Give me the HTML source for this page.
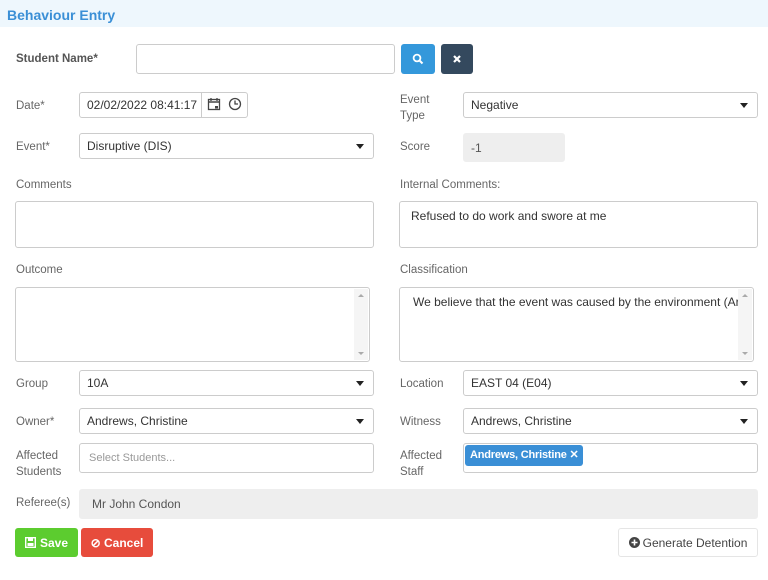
<!DOCTYPE html>
<html><head><style>
body{margin:0;width:768px;height:580px;background:#fff;font-family:"Liberation Sans",sans-serif;font-size:12px;color:#555;position:relative;overflow:hidden}
.a{position:absolute}
.hdr{left:0;top:0;width:768px;height:27px;background:#eef7fd}
.t{left:7px;top:7px;font-size:14px;font-weight:bold;color:#3a8fd6}
.lbl{position:absolute;color:#666;font-size:11.5px;line-height:16px}
.in{position:absolute;box-sizing:border-box;border:1px solid #ccc;border-radius:3px;background:#fff;color:#333;font-size:12px;padding:0 7px;display:flex;align-items:center;white-space:nowrap}
.sel::after{content:"";position:absolute;right:9px;top:50%;margin-top:-2px;border:4px solid transparent;border-top:5px solid #222;border-bottom:0}
.ta{align-items:flex-start;padding-top:7px}
.sb{position:absolute;right:1px;top:1px;bottom:1px;width:14px;background:#f5f5f5}
.sb::before{content:"";position:absolute;left:4px;top:5px;border:3px solid transparent;border-bottom:3px solid #aaa;border-top:0}
.sb::after{content:"";position:absolute;left:4px;bottom:5px;border:3px solid transparent;border-top:3px solid #aaa;border-bottom:0}
.gray{background:#eee;border-color:#eee;color:#555}
.btn{position:absolute;box-sizing:border-box;border-radius:3px;color:#fff;font-weight:bold;font-size:12px;display:flex;align-items:center;justify-content:center}
</style></head><body>
<div class="a hdr"></div><div class="a t">Behaviour Entry</div>

<div class="lbl" style="left:16px;top:51px;font-weight:bold;color:#555">Student Name*</div>
<div class="in" style="left:136px;top:44px;width:259px;height:30px"></div>
<div class="btn" style="left:401px;top:44px;width:34px;height:30px;background:#3498db"><svg width="12" height="12" viewBox="0 0 12 12"><circle cx="5" cy="5" r="3.4" fill="none" stroke="#fff" stroke-width="1.8"/><path d="M7.5 7.5L10.5 10.5" stroke="#fff" stroke-width="2"/></svg></div>
<div class="btn" style="left:441px;top:44px;width:32px;height:30px;background:#34495e"><svg width="10" height="10" viewBox="0 0 10 10"><path d="M2 2L8 8M8 2L2 8" stroke="#fff" stroke-width="2.2"/></svg></div>

<div class="lbl" style="left:16px;top:98px">Date*</div>
<div class="in" style="left:79px;top:92px;width:169px;height:26px">02/02/2022 08:41:17</div>
<div class="a" style="left:201px;top:92px;width:1px;height:26px;background:#ccc"></div>
<div class="a" style="left:207px;top:97px"><svg width="14" height="14" viewBox="0 0 14 14"><rect x="1.5" y="2.5" width="11" height="10" fill="none" stroke="#444" stroke-width="1.3"/><path d="M1.5 5h11" stroke="#444" stroke-width="1.5"/><path d="M4 1v3M10 1v3" stroke="#444" stroke-width="1.3"/><rect x="8" y="9" width="3" height="2.5" fill="#444"/></svg></div>
<div class="a" style="left:228px;top:97px"><svg width="14" height="14" viewBox="0 0 14 14"><circle cx="7" cy="7" r="5.5" fill="none" stroke="#444" stroke-width="1.3"/><path d="M7 3.5V7h3" fill="none" stroke="#444" stroke-width="1.3"/></svg></div>

<div class="lbl" style="left:400px;top:92px">Event<br>Type</div>
<div class="in sel" style="left:463px;top:92px;width:295px;height:26px">Negative</div>

<div class="lbl" style="left:16px;top:139px">Event*</div>
<div class="in sel" style="left:79px;top:133px;width:295px;height:26px">Disruptive (DIS)</div>
<div class="lbl" style="left:400px;top:139px">Score</div>
<div class="in gray" style="left:463px;top:133px;width:102px;height:29px">-1</div>

<div class="lbl" style="left:16px;top:177px">Comments</div>
<div class="in" style="left:15px;top:201px;width:359px;height:47px"></div>
<div class="lbl" style="left:400px;top:177px">Internal Comments:</div>
<div class="in ta" style="left:399px;top:201px;width:359px;height:47px;padding-left:11px">Refused to do work and swore at me</div>

<div class="lbl" style="left:16px;top:262px">Outcome</div>
<div class="in" style="left:15px;top:287px;width:355px;height:75px"><div class="sb"></div></div>
<div class="lbl" style="left:400px;top:262px">Classification</div>
<div class="in ta" style="left:399px;top:287px;width:355px;height:75px;padding-left:13px;overflow:hidden">We believe that the event was caused by the environment (Ar<div class="sb"></div></div>

<div class="lbl" style="left:16px;top:376px">Group</div>
<div class="in sel" style="left:79px;top:370px;width:295px;height:26px">10A</div>
<div class="lbl" style="left:400px;top:376px">Location</div>
<div class="in sel" style="left:463px;top:370px;width:295px;height:26px">EAST 04 (E04)</div>

<div class="lbl" style="left:16px;top:414px">Owner*</div>
<div class="in sel" style="left:79px;top:408px;width:295px;height:26px">Andrews, Christine</div>
<div class="lbl" style="left:400px;top:414px">Witness</div>
<div class="in sel" style="left:463px;top:408px;width:295px;height:26px">Andrews, Christine</div>

<div class="lbl" style="left:16px;top:448px">Affected<br>Students</div>
<div class="in" style="left:79px;top:443px;width:295px;height:30px;color:#999;font-size:11px;padding-left:9px">Select Students...</div>
<div class="lbl" style="left:400px;top:448px">Affected<br>Staff</div>
<div class="in" style="left:463px;top:443px;width:295px;height:30px;padding:0"></div>
<div class="a" style="left:465px;top:445px;width:118px;height:21px;background:#3a8fd6;border-radius:3px;color:#fff;font-size:11px;font-weight:bold;line-height:20px;padding-left:5px;box-sizing:border-box;white-space:nowrap;overflow:hidden;letter-spacing:-0.2px">Andrews, Christine ✕</div>

<div class="lbl" style="left:16px;top:495px">Referee(s)</div>
<div class="in gray" style="left:79px;top:489px;width:679px;height:30px;padding-left:12px">Mr John Condon</div>

<div class="btn" style="left:15px;top:528px;width:63px;height:29px;background:#5ccc2f"><svg width="11" height="11" viewBox="0 0 11 11" style="margin-right:4px"><rect x="0.7" y="0.7" width="9.6" height="9.6" fill="none" stroke="#fff" stroke-width="1.4"/><rect x="3" y="1" width="5" height="3" fill="#fff"/><rect x="2.5" y="6" width="6" height="3" fill="#fff"/></svg>Save</div>
<div class="btn" style="left:81px;top:528px;width:72px;height:29px;background:#e74c3c">⊘ Cancel</div>
<div class="btn" style="left:618px;top:528px;width:140px;height:29px;background:#fff;border:1px solid #e5e5e5;color:#444;font-weight:normal"><svg width="11" height="11" viewBox="0 0 11 11" style="margin-right:3px"><circle cx="5.5" cy="5.5" r="5.5" fill="#444"/><path d="M5.5 2.5v6M2.5 5.5h6" stroke="#fff" stroke-width="1.6"/></svg>Generate Detention</div>
</body></html>
